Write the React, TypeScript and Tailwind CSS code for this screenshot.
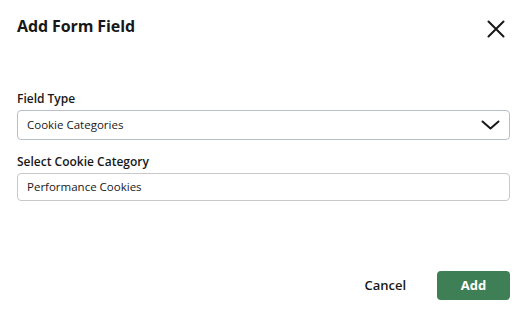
import React from "react";

export default function App() {
  return (
    <div
      className="w-[527px] h-[317px] bg-white flex flex-col px-[17px] text-[#181818]"
      style={{ fontFamily: '"Open Sans", "Liberation Sans", sans-serif' }}
    >
      <div className="flex items-start justify-between pt-[14px]">
        <h1 className="text-[16px] leading-[24px] font-bold tracking-[-0.1px]">Add Form Field</h1>
        <svg width="18" height="18" viewBox="0 0 18 18" className="mt-[6px] mr-[5px]" fill="none">
          <path d="M1.5 1.5 L16.5 16.5 M16.5 1.5 L1.5 16.5" stroke="#181818" strokeWidth="2" strokeLinecap="round" />
        </svg>
      </div>

      <div className="mt-[53px] flex flex-col">
        <label className="text-[12px] leading-[16px] font-semibold mb-[3px]">Field Type</label>
        <div className="h-[30px] border border-[#b8bfcb] rounded-[4px] flex items-center justify-between pl-[9px] pr-[9px]">
          <span className="text-[11.5px] text-[#181818]">Cookie Categories</span>
          <svg width="19" height="10" viewBox="0 0 19 10" fill="none">
            <path d="M1.5 1.5 L9.5 8.5 L17.5 1.5" stroke="#181818" strokeWidth="2" strokeLinecap="round" strokeLinejoin="round" />
          </svg>
        </div>

        <label className="text-[12px] leading-[16px] font-semibold mt-[14px] mb-[3px]">Select Cookie Category</label>
        <div className="h-[28px] border border-[#c9c9c9] rounded-[4px] flex items-center pl-[9px]">
          <span className="text-[11.5px] text-[#181818]">Performance Cookies</span>
        </div>
      </div>

      <div className="mt-auto pb-[17px] flex items-center justify-end">
        <button className="text-[13px] font-semibold text-[#181818] mr-[31px]">Cancel</button>
        <button className="w-[73px] h-[29px] rounded-[4px] bg-[#3f7f56] text-white text-[13px] font-bold">Add</button>
      </div>
    </div>
  );
}
